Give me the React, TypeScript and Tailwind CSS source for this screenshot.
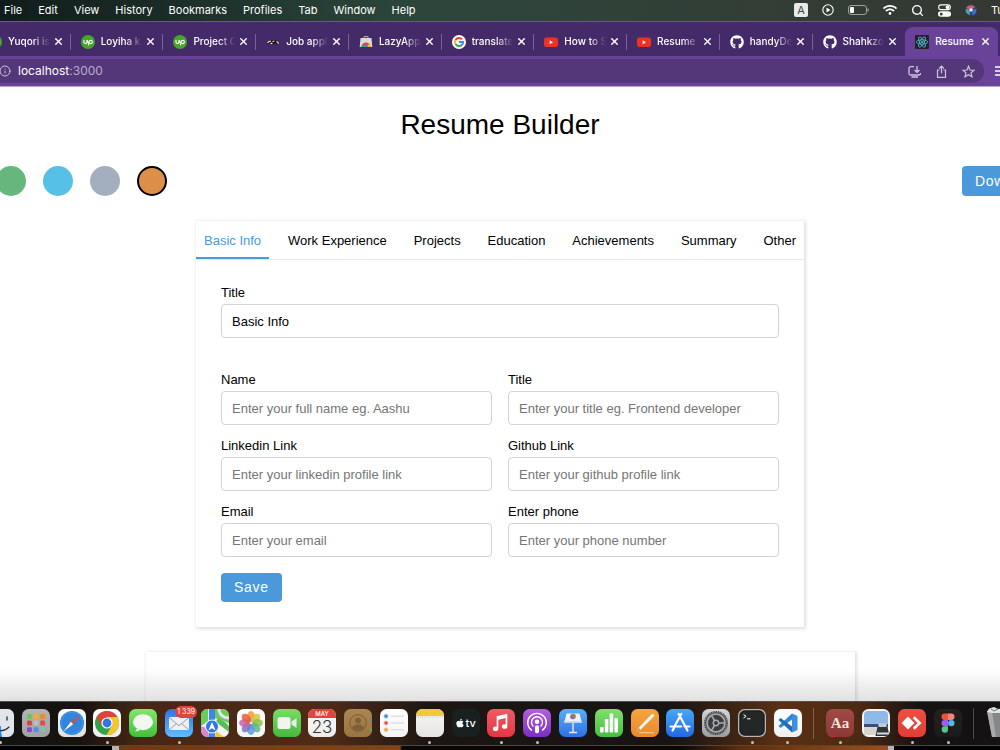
import React from 'react';
import { Search, X, Info } from 'lucide-react';
import { FaApple, FaGithub, FaWifi } from 'react-icons/fa';

interface BrowserTab {
  title: string;
  icon: React.ReactNode;
}

interface Field {
  id: string;
  label: string;
  placeholder: string;
}

const MENU = ['File', 'Edit', 'View', 'History', 'Bookmarks', 'Profiles', 'Tab', 'Window', 'Help'];

const SECTIONS = ['Basic Info', 'Work Experience', 'Projects', 'Education', 'Achievements', 'Summary', 'Other'];

const FIELDS: Field[] = [
  { id: 'name', label: 'Name', placeholder: 'Enter your full name eg. Aashu' },
  { id: 'role', label: 'Title', placeholder: 'Enter your title eg. Frontend developer' },
  { id: 'linkedin', label: 'Linkedin Link', placeholder: 'Enter your linkedin profile link' },
  { id: 'github', label: 'Github Link', placeholder: 'Enter your github profile link' },
  { id: 'email', label: 'Email', placeholder: 'Enter your email' },
  { id: 'phone', label: 'Enter phone', placeholder: 'Enter your phone number' },
];

const COLORS = [
  { name: 'Green', className: 'bg-[#67b67e]' },
  { name: 'Blue', className: 'bg-[#57c0e7]' },
  { name: 'Gray', className: 'bg-[#a3aebf]' },
  { name: 'Orange', className: 'bg-[#dd8f4a] border-2 border-black' },
];

/* ---------- browser tab icons ---------- */

const Upwork = () => (
  <svg viewBox="0 0 14 14" className="size-[14px]">
    <circle cx="7" cy="7" r="7" fill="#46a52c" />
    <path d="M3 5v2a1.5 1.5 0 0 0 3 0V5c.6 1.6 1.3 2.8 2.2 3.4M7.4 10.3 8.2 6.700a1.600 1.600 0 1 1 1.500 1.900c-.7 0-1.200-.3-1.700-.7" fill="none" stroke="#fff" strokeWidth="1.100" />
  </svg>
);

const JobIcon = () => (
  <svg viewBox="0 0 14 14" className="size-[14px]">
    <path d="M1 9c0-3 3-4 6-4 3-.3 5.500 1 6 4l-2 .5L9.500 8 7.500 9.500 4.500 8.500z" fill="#14101c" />
    <path d="M1.500 8c1-1.600 2-2 3.500-2M6.500 6.500 8.500 6M10.500 6.500c1 .4 1.600 1 2 2.200M4.500 8.300h2" fill="none" stroke="#f4f0dc" strokeWidth="1.200" />
  </svg>
);

const WebStore = () => (
  <svg viewBox="0 0 14 14" className="size-[14px]">
    <path d="M5 3V1.500h4V3" fill="none" stroke="#aeb1b5" strokeWidth="1" />
    <path d="M1.500 3h11l.8 9H.7z" fill="#d9dbde" />
    <path d="M2.500 12a4.500 4.500 0 0 1 9 0z" fill="#ea4335" />
    <path d="M2.500 12a4.500 4.500 0 0 1 1.300-3.200L7 12z" fill="#34a853" />
    <path d="M11.500 12a4.500 4.500 0 0 0-1.300-3.200L7 12z" fill="#fbbc05" />
    <path d="M5 12a2 2 0 0 1 4 0z" fill="#4285f4" />
  </svg>
);

const Google = () => (
  <svg viewBox="0 0 14 14" className="size-[14px]">
    <circle cx="7" cy="7" r="7" fill="#fff" />
    <g fill="none" strokeWidth="2">
      <path d="M3.500 4.900A4.100 4.100 0 0 1 10 4.200" stroke="#ea4335" />
      <path d="M3.500 9.100a4.100 4.100 0 0 1 0-4.200" stroke="#fbbc05" />
      <path d="M9.700 10.100a4.100 4.100 0 0 1-6.200-1" stroke="#34a853" />
      <path d="M7 7.100h4.100a4.100 4.100 0 0 1-1.400 3" stroke="#4285f4" />
    </g>
  </svg>
);

const YouTube = () => (
  <svg viewBox="0 0 14 14" className="size-[14px]">
    <rect y="2.500" width="14" height="9.500" rx="2.500" fill="#eb3323" />
    <path d="M5.700 5.200v4L9 7.200z" fill="#fff" />
  </svg>
);

const ReactIcon = () => (
  <svg viewBox="0 0 14 14" className="size-[14px]">
    <rect width="14" height="14" rx="1" fill="#20232a" />
    <g fill="none" stroke="#61c9ea" strokeWidth=".7">
      <ellipse cx="7" cy="7" rx="5.800" ry="2.200" />
      <ellipse cx="7" cy="7" rx="5.800" ry="2.200" transform="rotate(60 7 7)" />
      <ellipse cx="7" cy="7" rx="5.800" ry="2.200" transform="rotate(120 7 7)" />
    </g>
    <circle cx="7" cy="7" r="1" fill="#61c9ea" />
  </svg>
);

const GithubIcon = () => <FaGithub className="size-[14px] text-white" />;

const TABS: BrowserTab[] = [
  { title: 'Yuqori is', icon: <Upwork /> },
  { title: 'Loyiha ka', icon: <Upwork /> },
  { title: 'Project C', icon: <Upwork /> },
  { title: 'Job appl', icon: <JobIcon /> },
  { title: 'LazyApp', icon: <WebStore /> },
  { title: 'translate', icon: <Google /> },
  { title: 'How to S', icon: <YouTube /> },
  { title: 'Resume', icon: <YouTube /> },
  { title: 'handyDe', icon: <GithubIcon /> },
  { title: 'Shahkzo', icon: <GithubIcon /> },
  { title: 'Resume', icon: <ReactIcon /> },
];

/* ---------- address bar icons ---------- */

const InstallIcon = () => (
  <svg viewBox="0 0 13 13" className="block size-[13px]" fill="none" stroke="currentColor" strokeWidth="1.300">
    <path d="M6 1.700H2.500a1.500 1.500 0 0 0-1.500 1.500V8.500A1.500 1.500 0 0 0 2.500 10H11a1.500 1.500 0 0 0 1.500-1.500V8" />
    <path d="M9 1v6M6.500 5 9 7.300 11.500 5M3.500 12h6.500" />
  </svg>
);

const ShareIcon = () => (
  <svg viewBox="0 0 13 13" className="block size-[13px]" fill="none" stroke="currentColor" strokeWidth="1.200">
    <path d="M4.500 5H2.500v7.300h8V5h-2M6.500 8.500V1.300M4.200 3.500l2.300-2.300 2.300 2.300" />
  </svg>
);

const StarIcon = () => (
  <svg viewBox="0 0 13 13" className="block size-[13px]" fill="none" stroke="currentColor" strokeWidth="1.200">
    <path d="m6.500 1.300 1.500 3.700 4 .3L9 7.900l1 3.900-3.500-2.100L3 11.800l1-3.900L1 5.300 5 5z" />
  </svg>
);

/* ---------- dock icons ---------- */

const Tile: React.FC<{ fill: string; to?: string; id: string; children?: React.ReactNode }> = ({ fill, to, id, children }) => (
  <svg viewBox="0 0 28 28" className="size-7 overflow-visible">
    <defs>
      <linearGradient id={id} x1="0" y1="0" x2="0" y2="1">
        <stop offset="0" stopColor={fill} />
        <stop offset="1" stopColor={to ?? fill} />
      </linearGradient>
      <clipPath id={`${id}-clip`}>
        <rect width="28" height="28" rx="6.500" />
      </clipPath>
    </defs>
    <rect width="28" height="28" rx="6.500" fill={`url(#${id})`} />
    <g clipPath={`url(#${id}-clip)`}>{children}</g>
  </svg>
);

const Finder = () => (
  <Tile id="finder" fill="#35aef5" to="#1d7ff0">
    <path d="M13 0h15v28H16c-1-4-1-8-1-11h-4C11 10 12 4 13 0z" fill="#e1e4e8" />
    <path d="M7 8v3M21 8v3" stroke="#222b38" strokeWidth="1.300" strokeLinecap="round" />
    <path d="M5 18c5 5 13 5 18 0" fill="none" stroke="#222b38" strokeWidth="1.100" strokeLinecap="round" />
  </Tile>
);

const LAUNCHPAD = ['#67c852', '#efae38', '#f08a2f', '#d8443c', '#b9bcc2', '#e24a49', '#8949c9', '#4794e8', '#74c7a9'];

const Launchpad = () => (
  <Tile id="launchpad" fill="#b3b3b5" to="#a2a2a4">
    {LAUNCHPAD.map((color, i) => (
      <rect key={i} x={5 + (i % 3) * 6.6} y={5 + Math.floor(i / 3) * 6.6} width="4.900" height="4.900" rx="1.200" fill={color} />
    ))}
  </Tile>
);

const Safari = () => (
  <Tile id="safari" fill="#fbfbfb" to="#dedede">
    <circle cx="14" cy="14" r="12" fill="#2f86dc" />
    <circle cx="14" cy="14" r="10.500" fill="none" stroke="#8fc6f3" strokeWidth="1" strokeDasharray=".5 1.500" />
    <path d="m22.500 5.500-9.700 7.300 2.400 2.400z" fill="#e8433a" />
    <path d="m5.500 22.500 7.300-9.700 2.400 2.400z" fill="#f4f4f4" />
  </Tile>
);

const Chrome = () => (
  <Tile id="chrome" fill="#fff" to="#ededed">
    <circle cx="14" cy="14" r="12" fill="#36a14c" />
    <path d="M3.600 8a12 12 0 0 1 20.800 0L14 9.500l-5 7z" fill="#df4435" />
    <path d="M24.400 8A12 12 0 0 1 13.500 26L19 16.500 14 8z" fill="#f6c52d" />
    <circle cx="14" cy="14" r="5.600" fill="#fff" />
    <circle cx="14" cy="14" r="4.400" fill="#2f75e8" />
  </Tile>
);

const Messages = () => (
  <Tile id="messages" fill="#82e76f" to="#43bf3b">
    <ellipse cx="14" cy="13.200" rx="10" ry="8" fill="#f2f7ef" />
    <path d="M8 18c0 2.500-1 3.600-2.300 4.400 2.800 0 5-.8 6.300-2.500z" fill="#e3ebe0" />
  </Tile>
);

const Mail = () => (
  <Tile id="mail" fill="#3072ec" to="#61bcf8">
    <rect x="4" y="8" width="20" height="13" rx="1.500" fill="#eef0f2" />
    <path d="m4.500 8.800 9.500 8 9.500-8M4.500 20.500l7-6M23.500 20.500l-7-6" fill="none" stroke="#8c959e" strokeWidth=".9" />
  </Tile>
);

const Maps = () => (
  <Tile id="maps" fill="#e9e8e2">
    <path d="M0 0h7v12L0 17zM14 0h14v14L14 9z" fill="#6ccb5d" />
    <path d="M8 0h6v28H8z" fill="#3f85ee" />
    <path d="M0 18c4-1 8 4 8 10H0z" fill="#d987cd" />
    <path d="m13 10 15 14v4H15z" fill="#f6f4f0" />
    <path d="M17 9c4 3 9 4 11 9v5L15 13z" fill="#59bd54" />
    <path d="m14 28 1-6 8 6z" fill="#f1c340" />
    <path d="M18 0c0 5 4 9 10 9" fill="none" stroke="#e4e4e4" strokeWidth="3" />
    <circle cx="11" cy="17.500" r="6.500" fill="#2f78eb" stroke="#fff" strokeWidth=".9" />
    <path d="m11 13 3.600 8.500L11 19.300l-3.600 2.200z" fill="#fff" />
  </Tile>
);

const PETALS = ['#f4992d', '#d8c540', '#8fc04a', '#5cb98a', '#5b9bdc', '#7e74c8', '#c264ac', '#ea5a45'];

const Photos = () => (
  <Tile id="photos" fill="#fff" to="#f4f4f4">
    {PETALS.map((color, i) => (
      <ellipse key={color} cx="14" cy="7.500" rx="3.900" ry="5.400" fill={color} fillOpacity=".85" transform={`rotate(${i * 45} 14 14)`} />
    ))}
  </Tile>
);

const FaceTime = () => (
  <Tile id="facetime" fill="#79dd67" to="#46b93d">
    <rect x="4.500" y="8" width="13" height="12" rx="2.500" fill="#f1f5f0" />
    <path d="m18.500 12.500 5-3.500v10l-5-3.500z" fill="#e8eee6" />
  </Tile>
);

const Calendar = () => (
  <Tile id="calendar" fill="#fafafa" to="#ececec">
    <rect width="28" height="9" fill="#e0463e" />
    <text x="14" y="7" textAnchor="middle" fontSize="6" fontWeight="500" fill="#fff" fontFamily="Inter, sans-serif">MAY</text>
    <text x="14" y="24" textAnchor="middle" fontSize="17" fontWeight="300" fill="#333" fontFamily="Inter, sans-serif">23</text>
  </Tile>
);

const Contacts = () => (
  <Tile id="contacts" fill="#ab8651" to="#997442">
    <circle cx="14" cy="14" r="8.300" fill="none" stroke="#7d5d33" strokeWidth="1" />
    <circle cx="14" cy="11.500" r="3" fill="#80603a" />
    <path d="M8 19c2-5 10-5 12 0-3 4-9 4-12 0z" fill="#80603a" />
    <path d="M27.500 9v4" stroke="#5a86b5" strokeWidth="2" />
    <path d="M27.500 14v4" stroke="#b9713c" strokeWidth="2" />
    <path d="M27.500 19v4" stroke="#65a352" strokeWidth="2" />
  </Tile>
);

const Reminders = () => (
  <Tile id="reminders" fill="#fff" to="#f4f4f4">
    <path d="M11 7.200h13M11 14h13M11 20.800h13" stroke="#cfcfd2" strokeWidth=".9" />
    <circle cx="6" cy="7.200" r="2" fill="#2f80ec" stroke="#a9cbf7" />
    <circle cx="6" cy="14" r="2" fill="#e1483d" stroke="#f3b4ae" />
    <circle cx="6" cy="20.800" r="2" fill="#ef9a35" stroke="#f8d3a4" />
  </Tile>
);

const Notes = () => (
  <Tile id="notes" fill="#f7f7f5" to="#e5e4e1">
    <rect width="28" height="7" fill="#f5c83b" />
    <path d="M0 8h28" stroke="#b9b4a5" strokeWidth=".7" strokeDasharray="1 1" />
  </Tile>
);

const AppleTv = () => (
  <span className="flex size-7 items-center justify-center rounded-[7px] bg-[#18211f] text-white">
    <FaApple className="size-[10px]" />
    <span className="text-[11px] leading-none font-medium">tv</span>
  </span>
);

const Music = () => (
  <Tile id="music" fill="#ee5b66" to="#e33643">
    <path d="M10.500 19V8l9-2.200v11" fill="none" stroke="#fff" strokeWidth="1.700" />
    <path d="m10.500 8 9-2.200v3l-9 2.200z" fill="#fff" />
    <ellipse cx="8.600" cy="19.800" rx="2.700" ry="2.300" fill="#fff" />
    <ellipse cx="17.600" cy="17.500" rx="2.700" ry="2.300" fill="#fff" />
  </Tile>
);

const Podcasts = () => (
  <Tile id="podcasts" fill="#b45ee0" to="#7a2fc0">
    <g fill="none" stroke="#fff" strokeWidth="1.400">
      <path d="M9 21.500a9.300 9.300 0 1 1 10 0" />
      <path d="M10.500 17.500a5.500 5.500 0 1 1 7 0" />
    </g>
    <circle cx="14" cy="12.800" r="2.300" fill="#fff" />
    <rect x="12" y="16.300" width="4" height="8" rx="2" fill="#fff" />
  </Tile>
);

const Keynote = () => (
  <Tile id="keynote" fill="#58aef7" to="#2c72e8">
    <path d="M7.500 4.500h13l2 8h-17z" fill="#eef3f7" />
    <path d="M5 13h18" stroke="#dfe7ef" strokeWidth="1.500" />
    <path d="M14 14v9.500M10 23.500h8" stroke="#e3e9ef" strokeWidth="1.400" />
    <circle cx="14" cy="7.500" r="2.700" fill="#e3544a" />
    <path d="M14 7.500V4.800a2.700 2.700 0 0 1 2.700 2.700z" fill="#4caf59" />
    <path d="M11.300 7.500H14v2.700a2.700 2.700 0 0 1-2.700-2.700z" fill="#3f84e8" />
  </Tile>
);

const Numbers = () => (
  <Tile id="numbers" fill="#7fe06b" to="#47bd42">
    <rect x="5" y="18" width="3.600" height="5.500" rx=".7" fill="#fff" />
    <rect x="9.800" y="10" width="3.600" height="13.500" rx=".7" fill="#fff" />
    <rect x="14.600" y="4.500" width="3.600" height="19" rx=".7" fill="#fff" />
    <rect x="19.400" y="9" width="3.600" height="14.500" rx=".7" fill="#fff" />
  </Tile>
);

const Pages = () => (
  <Tile id="pages" fill="#f4a63c" to="#ea8a2c">
    <path d="m5.500 22.500 2.200-3.800L20.500 5.200c1.500-1 3.300.6 2.300 2.200L9.500 20.700z" fill="#f7f5f2" />
    <path d="m5.500 22.500 2.200-3.800 1.800 2z" fill="#c99a5d" />
    <path d="M8 23.700h15" stroke="#fbd9a5" strokeWidth=".9" />
  </Tile>
);

const AppStore = () => (
  <Tile id="appstore" fill="#46a8f4" to="#2468e4">
    <path d="M15.300 5 9.200 16M12.700 5l8.800 16.500M4.500 17.500h10.500M18.500 17.500h5M8 19l-1.500 2.500" stroke="#fff" strokeWidth="2.200" strokeLinecap="round" />
  </Tile>
);

const Settings = () => (
  <Tile id="settings" fill="#d4d5d8" to="#9b9ca0">
    <circle cx="14" cy="14" r="11" fill="#55565a" />
    <circle cx="14" cy="14" r="11.500" fill="none" stroke="#3a3b3e" strokeWidth="1.200" strokeDasharray="1 .8" />
    <circle cx="14" cy="14" r="9" fill="none" stroke="#a9aaad" strokeWidth="1.500" />
    <circle cx="14" cy="14" r="7.500" fill="#3c3d40" />
    <g fill="none" stroke="#a9aaad" strokeWidth="1.500">
      <circle cx="14" cy="14" r="2.700" />
      <path d="M17 14h5.500M12.500 11.500l-3-5M12.500 16.500l-3 5" />
    </g>
  </Tile>
);

const Terminal = () => (
  <Tile id="terminal" fill="#b3b5b6">
    <rect x="1.300" y="1.300" width="25.400" height="25.400" rx="5.500" fill="#17191a" />
    <rect x="2.500" y="2.500" width="23" height="23" rx="4.500" fill="#242728" />
    <path d="m5.500 5.500 2.600 1.800-2.600 1.800M9 9.800h3.500" fill="none" stroke="#fff" strokeWidth="1" />
  </Tile>
);

const VsCode = () => (
  <Tile id="vscode" fill="#fff" to="#efefef">
    <path d="M18 4.500 4.500 17l2 2L18 10.500z" fill="#2f86d4" />
    <path d="M18 23.500 4.500 11l2-2L18 17.500z" fill="#1f6cb8" />
    <path d="m18 4.500 5.500 2.400v14.200L18 23.500z" fill="#3b8fdc" />
  </Tile>
);

const Dictionary = () => (
  <Tile id="dictionary" fill="#a34946" to="#8a3836">
    <path d="M2 28h7" stroke="#cf2e2c" strokeWidth="3" />
    <text x="14" y="19" textAnchor="middle" fontSize="15" fontWeight="700" fill="#f3e3dc" fontFamily="Liberation Serif, serif">Aa</text>
  </Tile>
);

const Preview = () => (
  <Tile id="preview" fill="#f4f4f2">
    <rect x="2" y="2" width="24" height="24" rx="4" fill="#8fb9e8" />
    <path d="M2 15h24v4H2z" fill="#3a4d7e" />
    <path d="M2 18h24v8H2z" fill="#dad5ca" />
    <path d="M16 14.500h9l-1 4h-7z" fill="#c9ccce" />
    <path d="M15.500 18h10l2 9h-14z" fill="#303439" />
    <path d="M15 24.500h12" stroke="#d8dadb" strokeWidth="2" />
  </Tile>
);

const AnyDesk = () => (
  <Tile id="anydesk" fill="#ee4e43" to="#df3d35">
    <path d="m10 7.500 6.500 6.500-6.500 6.500L3.500 14z" fill="#fff" />
    <path d="m14.800 9.200 1.900-1.900L23.500 14l-6.800 6.700-1.900-1.900 4.800-4.800z" fill="#fff" />
  </Tile>
);

const Figma = () => (
  <Tile id="figma" fill="#26201e" to="#1a1a1c">
    <path d="M14 4.500h-3.300a3.200 3.200 0 0 0 0 6.400H14z" fill="#ed5437" />
    <path d="M14 4.500h3.300a3.200 3.200 0 0 1 0 6.400H14z" fill="#f3857a" />
    <path d="M14 10.900h-3.300a3.200 3.200 0 0 0 0 6.400H14z" fill="#a35bf0" />
    <circle cx="17.300" cy="14.100" r="3.200" fill="#53b6f4" />
    <path d="M10.700 17.300H14v3.200a3.200 3.200 0 1 1-3.300-3.200z" fill="#4fc787" />
  </Tile>
);

const Trash = () => (
  <svg viewBox="0 0 28 28" className="size-7 overflow-visible">
    <path d="M1 2h26l-4 26H6z" fill="#858789" />
    <path d="m1 2 5 26h4L6 2z" fill="#a8aaac" />
    <path d="M1 3c2-5 5-4 7-5l4 2 6-1 8 3-9 2H6z" fill="#dfe4e5" />
    <path d="m5 0 3 2 4-2" fill="none" stroke="#5f7f68" />
  </svg>
);

const APPS = [
  { name: 'Finder', Icon: Finder, open: true },
  { name: 'Launchpad', Icon: Launchpad },
  { name: 'Safari', Icon: Safari },
  { name: 'Chrome', Icon: Chrome, open: true },
  { name: 'Messages', Icon: Messages },
  { name: 'Mail', Icon: Mail, open: true, badge: '1 339' },
  { name: 'Maps', Icon: Maps },
  { name: 'Photos', Icon: Photos },
  { name: 'FaceTime', Icon: FaceTime },
  { name: 'Calendar', Icon: Calendar },
  { name: 'Contacts', Icon: Contacts },
  { name: 'Reminders', Icon: Reminders },
  { name: 'Notes', Icon: Notes, open: true },
  { name: 'TV', Icon: AppleTv },
  { name: 'Music', Icon: Music, open: true },
  { name: 'Podcasts', Icon: Podcasts, open: true },
  { name: 'Keynote', Icon: Keynote },
  { name: 'Numbers', Icon: Numbers },
  { name: 'Pages', Icon: Pages },
  { name: 'App Store', Icon: AppStore },
  { name: 'Settings', Icon: Settings },
  { name: 'Terminal', Icon: Terminal, open: true },
  { name: 'VS Code', Icon: VsCode, open: true },
];

const RECENT = [
  { name: 'Dictionary', Icon: Dictionary, open: true },
  { name: 'Preview', Icon: Preview },
  { name: 'AnyDesk', Icon: AnyDesk, open: true },
  { name: 'Figma', Icon: Figma, open: true },
];

/* ---------- layout ---------- */

const MenuBar = () => (
  <header className="flex h-[22px] shrink-0 items-center justify-between overflow-hidden border-b border-[#6b5a80] bg-linear-to-r from-[#101c1b] via-[#2c463b] via-40% to-[#343832] pb-px pl-1 text-[11px] text-white">
    <nav className="flex gap-4">
      {MENU.map((item) => (
        <button key={item} type="button">{item}</button>
      ))}
    </nav>
    <div className="flex items-center gap-[14px]">
      <span className="flex size-[14px] items-center justify-center rounded-[2px] bg-[#e8eae8] text-[11px] text-[#3b463f]">A</span>
      <svg viewBox="0 0 12 12" className="size-3">
        <circle cx="6" cy="6" r="5.200" fill="none" stroke="#fff" strokeWidth="1.100" />
        <path d="M4.500 3.500v5l4-2.500z" fill="#fff" />
      </svg>
      <svg viewBox="0 0 21 10" className="h-[10px] w-[21px]">
        <rect x=".5" y=".5" width="18" height="9" rx="2.500" fill="none" stroke="#9ba29d" />
        <rect x="2" y="2" width="4" height="6" rx="1" fill="#fff" />
        <path d="M20 3.500v3" stroke="#9ba29d" strokeWidth="1.200" />
      </svg>
      <FaWifi className="size-[14px]" />
      <Search className="size-[13px]" strokeWidth={2.5} />
      <svg viewBox="0 0 12 12" className="size-[13px]">
        <rect x=".6" y=".8" width="10.800" height="4.400" rx="2.200" fill="none" stroke="#fff" />
        <circle cx="8.800" cy="3" r="1.700" fill="#fff" />
        <rect y="6.700" width="12" height="5" rx="2.500" fill="#fff" />
        <circle cx="3" cy="9.200" r="1.400" fill="#37423b" />
      </svg>
      <svg viewBox="0 0 12 12" className="size-3">
        <circle cx="6" cy="6" r="6" fill="#35405f" />
        <path d="M1 4c2-3 6-4 9-1L6 6z" fill="#d15b7c" />
        <path d="M1 5c3 0 4 2 4 6C2 10 0 8 1 5z" fill="#43a8b5" />
        <path d="M11 5c-2 0-4 1-4 6 3 0 5-3 4-6z" fill="#3d6fd8" />
        <circle cx="6" cy="6" r="1.800" fill="#e9eef7" />
      </svg>
      <span className="w-[9px] whitespace-nowrap">Tu</span>
    </div>
  </header>
);

const TabStrip = () => (
  <div className="shrink-0 overflow-hidden bg-[#442a68] pt-[5px]">
    <div className="mr-[2px] -ml-[22px] grid grid-cols-11">
      {TABS.map((tab, i) => {
        const active = i === TABS.length - 1;
        return (
          <div
            key={i}
            className={`flex h-[29px] items-center rounded-t-lg pl-[10px] ${active ? 'bg-[#69439a]' : ''}`}
          >
            <span className="shrink-0">{tab.icon}</span>
            <span
              className={`ml-[6px] min-w-0 flex-1 overflow-hidden text-[10px] font-medium whitespace-nowrap text-white ${
                active ? '' : '[mask-image:linear-gradient(to_right,black_60%,transparent)]'
              }`}
            >
              {tab.title}
            </span>
            <button type="button" aria-label="Close tab" className="mr-[6px] ml-[3px] text-white">
              <X className="size-[11px]" strokeWidth={3} />
            </button>
            <span className={`h-4 w-px ${i < TABS.length - 2 ? 'bg-[#77639a]' : ''}`} />
          </div>
        );
      })}
    </div>
  </div>
);

const Toolbar = () => (
  <div className="flex h-[31px] shrink-0 items-center overflow-hidden border-b border-[#b9a3d3] bg-[#69439a]">
    <div className="flex h-6 flex-1 items-center rounded-r-full bg-[#533778] pr-[9px] text-[#cfc4de]">
      <Info className="-ml-px size-3" />
      <span className="ml-[7px] flex-1 text-[12px] text-[#b9accb]">
        <span className="text-white">localhost</span>:3000
      </span>
      <div className="flex items-center gap-[14px]">
        <button type="button" aria-label="Install app"><InstallIcon /></button>
        <button type="button" aria-label="Share"><ShareIcon /></button>
        <button type="button" aria-label="Bookmark"><StarIcon /></button>
      </div>
    </div>
    <button type="button" aria-label="Reading list" className="ml-[11px] w-[5px] overflow-hidden">
      <svg viewBox="0 0 12 10" className="h-[10px] w-3 max-w-none">
        <path d="M0 1h12M0 5h12M0 9h12" stroke="#fff" strokeWidth="1.300" />
      </svg>
    </button>
  </div>
);

const inputClass =
  'mt-[3px] block h-[34px] w-full rounded border border-[#d3d3d3] bg-white px-[10px] text-[13px] text-black placeholder:text-[#757575]';

const ResumeForm = () => (
  <section className="mx-auto mt-[25px] w-full max-w-[608px] shadow-[1px_1px_3px_1px_rgba(0,0,0,0.12)]">
    <div className="flex h-[39px] justify-between border-b border-[#e9e9e9]">
      {SECTIONS.map((section, i) => (
        <button
          key={section}
          type="button"
          className={`border-b-2 px-2 pt-1 ${i === 0 ? 'border-[#4b98db] text-[#4b98db]' : 'border-transparent'}`}
        >
          {section}
        </button>
      ))}
    </div>
    <form className="p-[25px]">
      <label htmlFor="section-title" className="block leading-4">Title</label>
      <input id="section-title" defaultValue="Basic Info" className={inputClass} />
      <div className="mt-[34px] grid grid-cols-2 gap-x-4 gap-y-[13px]">
        {FIELDS.map((field) => (
          <div key={field.id}>
            <label htmlFor={field.id} className="block leading-4">{field.label}</label>
            <input id={field.id} placeholder={field.placeholder} className={inputClass} />
          </div>
        ))}
      </div>
      <button type="button" className="mt-4 block h-[29px] rounded bg-[#4b98db] px-[13px] text-[14px] tracking-wider text-white">
        Save
      </button>
    </form>
  </section>
);

interface DockItemProps {
  name: string;
  Icon: React.FC;
  open?: boolean;
  badge?: string;
}

const DockItem: React.FC<DockItemProps> = ({ name, Icon, open, badge }) => (
  <button type="button" aria-label={name} className="relative flex w-7 flex-col items-center">
    <Icon />
    <span className={`mt-1 size-[3px] rounded-full ${open ? 'bg-[#c9beb4]' : ''}`} />
    {badge && (
      <span className="absolute -top-[3px] -right-1 rounded-full bg-[#e2453d] px-[2px] text-[7px] leading-3 whitespace-nowrap text-white">
        {badge}
      </span>
    )}
  </button>
);

const Dock = () => (
  <footer className="shrink-0 overflow-hidden bg-[linear-gradient(to_right,#000_112px,#b5b5b5_112px,#b5b5b5_119px,#6f3914_119px,#80441a_400px,#0a0706_402px,#0a0706_680px,#5b2f10_740px,#945020_888px,#b5b5b5_888px,#b5b5b5_894px,#000_894px)] pb-[4px]">
    <div className="h-[45px] border-t border-b border-t-[#55504d] border-b-[#4c4743] bg-[linear-gradient(to_right,#131313_0%,#17120f_8%,#482615_14%,#4f2b17_33%,#1c1513_43%,#171413_67%,#5a3014_78%,#4c2913_86%,#141212_92%)]">
      <div className="-mx-[14px] flex pt-[7px]">
        <div className="flex flex-1 justify-between">
          {APPS.map((app) => (
            <DockItem key={app.name} {...app} />
          ))}
        </div>
        <span className="-mt-px mr-3 ml-[11px] h-[31px] w-px bg-[#7b6249]" />
        <div className="flex gap-2">
          {RECENT.map((app) => (
            <DockItem key={app.name} {...app} />
          ))}
        </div>
        <span className="-mt-px mr-3 ml-[11px] h-[31px] w-px bg-[#4c4c4c]" />
        <DockItem name="Trash" Icon={Trash} />
      </div>
    </div>
  </footer>
);

const App: React.FC = () => (
  <div className="flex h-screen flex-col overflow-hidden bg-white font-[Inter,sans-serif]">
    <MenuBar />
    <TabStrip />
    <Toolbar />
    <main className="relative min-h-0 flex-1 overflow-hidden font-['Liberation_Sans',Arial,sans-serif] text-[13px] text-black">
      <h1 className="pt-[18px] text-center text-[28px] leading-10">Resume Builder</h1>
      <div className="mt-[21px] -mr-16 -ml-1 flex items-center justify-between">
        <div className="flex gap-[17px]">
          {COLORS.map((color) => (
            <button key={color.name} type="button" aria-label={color.name} className={`size-[30px] rounded-full ${color.className}`} />
          ))}
        </div>
        <button type="button" className="h-[30px] w-[102px] rounded bg-[#4b98db] pl-[13px] text-left text-[14px] tracking-wider text-white">
          Download
        </button>
      </div>
      <ResumeForm />
      <section className="mx-auto mt-[25px] h-96 w-full max-w-[709px] shadow-[1px_1px_3px_1px_rgba(0,0,0,0.12)]" />
      <div className="pointer-events-none absolute inset-x-0 bottom-0 h-8 bg-linear-to-b from-transparent to-black/12" />
    </main>
    <Dock />
  </div>
);

export default App;
